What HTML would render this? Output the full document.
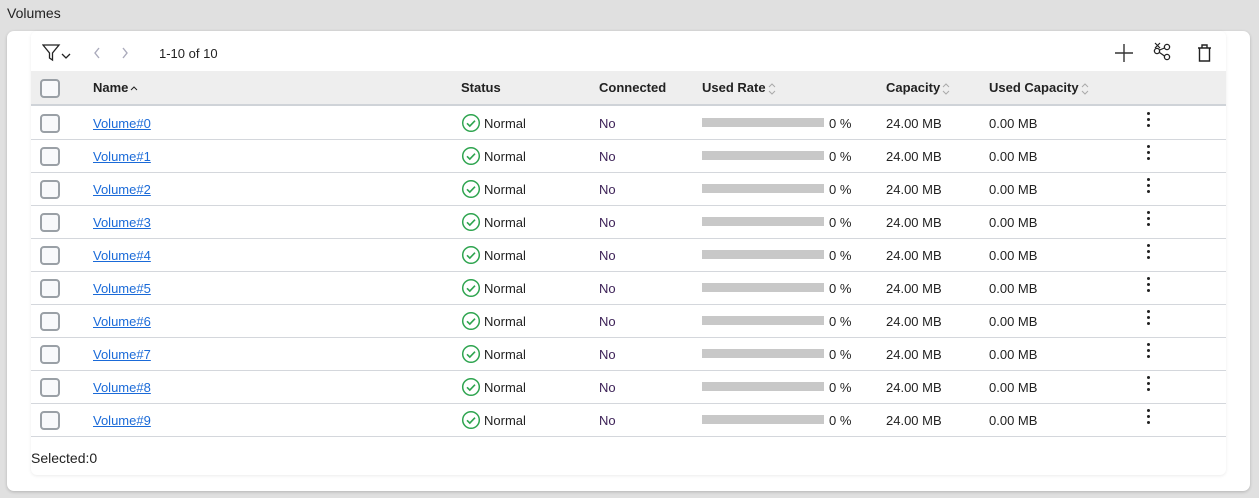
<!DOCTYPE html>
<html><head><style>
*{box-sizing:border-box;margin:0;padding:0}
body{width:1259px;height:498px;background:#e0e0e0;font-family:"Liberation Sans",sans-serif;font-size:13px;color:#222;position:relative;overflow:hidden}
.title{position:absolute;left:7px;top:5px;font-size:14px;color:#222}
.card{position:absolute;left:7px;top:31px;width:1243px;height:460px;background:#fff;border-radius:7px;box-shadow:0 1px 3px rgba(0,0,0,.2)}
.inner{position:absolute;left:31px;top:31px;width:1195px;height:444px;background:#fff;border-radius:6px;box-shadow:0 1px 3px rgba(0,0,0,.08)}
.hdr{position:absolute;left:31px;top:71px;width:1195px;height:35px;background:#eeeeee;border-bottom:2px solid #cfd3d8}
.hdr span{position:absolute;top:9px;font-weight:bold;font-size:13px;color:#222;white-space:nowrap}
.hdr svg{vertical-align:middle;margin-left:2px}
.row{position:absolute;left:31px;width:1195px;height:33px;border-bottom:1px solid #d4d7dc}
.row>*{position:absolute}
.cb{width:20px;height:19px;border:2px solid #9aa0a6;border-radius:4px;background:#f8f9fb;left:9px;top:7px}
.t{top:9px;font-size:13px}
a{color:#1a6ad8;text-decoration:underline}
.bar{left:671px;top:11px;width:122px;height:9px;background:#c8c8c8}
.dots{left:1116px;top:5px;width:4px}
.dots i{display:block;width:3px;height:3px;background:#222;border-radius:50%;margin-bottom:3px}
</style></head><body>
<div class="title">Volumes</div>
<div class="card"></div>
<div class="inner"></div>
<svg style="position:absolute;left:42px;top:43px" width="30" height="20" viewBox="0 0 30 20"><path d="M1 2h16l-6.5 8v7l-3-2v-5z" fill="none" stroke="#222" stroke-width="1.3"/><path d="M20 11l4 4 4-4" fill="none" stroke="#222" stroke-width="1.3"/></svg>
<svg style="position:absolute;left:91px;top:46px" width="40" height="14"><path d="M8 2l-4 5 4 5" fill="none" stroke="#aab" stroke-width="1.4"/><path d="M32 2l4 5-4 5" fill="none" stroke="#aab" stroke-width="1.4"/></svg>
<div style="position:absolute;left:159px;top:46px;font-size:13px">1-10 of 10</div>
<svg style="position:absolute;left:1114px;top:43px" width="20" height="20"><path d="M10 1v18M1 10h18" stroke="#333" stroke-width="1.4"/></svg>
<svg style="position:absolute;left:1153px;top:42px" width="20" height="20"><circle cx="4" cy="9" r="2.6" fill="none" stroke="#222" stroke-width="1.3"/><circle cx="14" cy="5" r="2.6" fill="none" stroke="#222" stroke-width="1.3"/><circle cx="14" cy="15" r="2.6" fill="none" stroke="#222" stroke-width="1.3"/><path d="M6.5 8L11.5 6M6.5 10.5L11.5 14M2 1l5 5M7 1L2 6" stroke="#222" stroke-width="1.2" fill="none"/></svg>
<svg style="position:absolute;left:1196px;top:43px" width="18" height="20"><path d="M2 5h13M6 5V2h5v3M3.5 5v13h10V5" fill="none" stroke="#222" stroke-width="1.4"/></svg>
<div class="hdr">
<div class="cb" style="position:absolute;top:8px"></div>
<span style="left:62px">Name<svg width="8" height="10"><path d="M1 6l3-3 3 3" fill="none" stroke="#222" stroke-width="1"/></svg></span>
<span style="left:430px">Status</span>
<span style="left:568px">Connected</span>
<span style="left:671px">Used Rate<svg width="8" height="12"><path d="M1 4l3-3 3 3M1 8l3 3 3-3" fill="none" stroke="#aaa" stroke-width="1"/></svg></span>
<span style="left:855px">Capacity<svg width="8" height="12"><path d="M1 4l3-3 3 3M1 8l3 3 3-3" fill="none" stroke="#aaa" stroke-width="1"/></svg></span>
<span style="left:958px">Used Capacity<svg width="8" height="12"><path d="M1 4l3-3 3 3M1 8l3 3 3-3" fill="none" stroke="#aaa" stroke-width="1"/></svg></span>
</div>
<div id="rows"></div>
<div style="position:absolute;left:31px;top:450px;font-size:14px">Selected:0</div>
<script>
var h='';
for(var i=0;i<10;i++){var y=107+i*33;
h+='<div class="row" style="top:'+y+'px"><div class="cb"></div><a class="t" style="left:62px">Volume#'+i+'</a>'+
'<svg style="left:430px;top:6px" width="20" height="20"><circle cx="10" cy="10" r="8.3" fill="none" stroke="#2ea44f" stroke-width="1.5"/><path d="M6 10.3l2.8 2.8 5.2-5.4" fill="none" stroke="#2ea44f" stroke-width="1.6"/></svg>'+
'<span class="t" style="left:453px">Normal</span><span class="t" style="left:568px;color:#3a1f55">No</span><div class="bar"></div><span class="t" style="left:798px">0 %</span>'+
'<span class="t" style="left:855px">24.00 MB</span><span class="t" style="left:958px">0.00 MB</span><div class="dots"><i></i><i></i><i></i></div></div>';}
document.getElementById('rows').innerHTML=h;
</script>
</body></html>
